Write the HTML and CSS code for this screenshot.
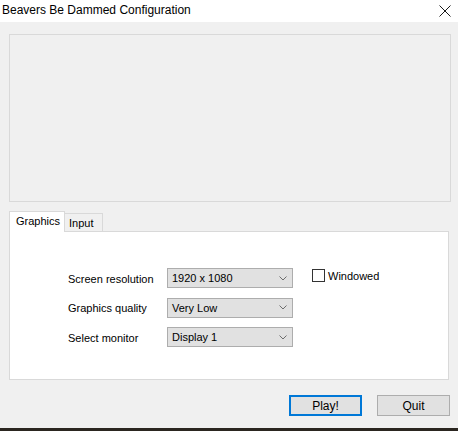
FILE: index.html
```html
<!DOCTYPE html>
<html>
<head>
<meta charset="utf-8">
<link rel="stylesheet" href="styles.css">
</head>
<body>
<div class="window">
  <div class="titlebar">
    <span class="title">Beavers Be Dammed Configuration</span>
    <svg class="close" width="12" height="12" viewBox="0 0 12 12"><path d="M0.5 0.5 L11.5 11.5 M11.5 0.5 L0.5 11.5" stroke="#1a1a1a" stroke-width="1" fill="none"/></svg>
  </div>
  <div class="client">
    <div class="banner"></div>
    <div class="tabs">
      <div class="tab active">Graphics</div>
      <div class="tab">Input</div>
    </div>
    <div class="tabpanel">
      <div class="form">
        <span class="label">Screen resolution</span>
        <div class="combo"><span>1920 x 1080</span><svg class="chev" width="8" height="5" viewBox="0 0 8 5"><polyline points="0.5,0.5 4,4 7.5,0.5" stroke="#6d6d6d" fill="none" stroke-width="1"/></svg></div>
        <label class="check"><span class="box"></span><span>Windowed</span></label>
        <span class="label">Graphics quality</span>
        <div class="combo"><span>Very Low</span><svg class="chev" width="8" height="5" viewBox="0 0 8 5"><polyline points="0.5,0.5 4,4 7.5,0.5" stroke="#6d6d6d" fill="none" stroke-width="1"/></svg></div>
        <span></span>
        <span class="label">Select monitor</span>
        <div class="combo"><span>Display 1</span><svg class="chev" width="8" height="5" viewBox="0 0 8 5"><polyline points="0.5,0.5 4,4 7.5,0.5" stroke="#6d6d6d" fill="none" stroke-width="1"/></svg></div>
        <span></span>
      </div>
    </div>
    <div class="buttons">
      <div class="btn default">Play!</div>
      <div class="btn">Quit</div>
    </div>
  </div>
  <div class="taskbar"></div>
</div>
</body>
</html>
```
FILE: styles.css
```css
* { box-sizing: border-box; }
html, body { margin: 0; padding: 0; }
body {
  width: 458px;
  height: 431px;
  overflow: hidden;
  font-family: "Liberation Sans", Arial, sans-serif;
  font-size: 11px;
  color: #000;
  background: #f0f0f0;
}
.window { display: flex; flex-direction: column; height: 431px; }
.titlebar {
  height: 22px;
  background: #fff;
  display: flex;
  align-items: center;
  justify-content: space-between;
  padding: 0 7px 0 2px;
}
.title { font-size: 12px; color: #000; position: relative; top: -1px; }
.close { margin-top: 0px; }
.client {
  flex: 1;
  background: #f0f0f0;
  padding: 12px 0 0 9px;
  display: flex;
  flex-direction: column;
}
.banner {
  width: 442px;
  height: 168px;
  border: 1px solid #d9d9d9;
  background: #f0f0f0;
}
.tabs {
  margin-top: 9px;
  height: 20px;
  display: flex;
  align-items: flex-end;
  position: relative;
  z-index: 1;
}
.tab {
  height: 18px;
  padding: 0 4px;
  border: 1px solid #d9d9d9;
  border-bottom: none;
  border-left: none;
  background: #f0f0f0;
  display: flex;
  align-items: center;
  width: 38px;
}
.tab.active {
  height: 21px;
  width: 56px;
  margin-bottom: -1px;
  border-left: 1px solid #d9d9d9;
  background: #fff;
  padding: 0 0 2px 6px;
}
.tabpanel {
  width: 440px;
  height: 149px;
  border: 1px solid #d9d9d9;
  background: #fff;
  padding: 36px 0 0 58px;
}
.form {
  display: grid;
  grid-template-columns: 99px 126px auto;
  grid-auto-rows: 20px;
  row-gap: 9.5px;
  column-gap: 0;
  align-items: center;
}
.label { padding-top: 1px; }
.combo {
  height: 20px;
  border: 1px solid #adadad;
  background: #e1e1e1;
  display: flex;
  align-items: center;
  justify-content: space-between;
  padding: 0 5px 0 4px;
}
.check {
  display: flex;
  align-items: center;
  margin-left: 19px;
  align-self: start;
  margin-top: 1px;
}
.box {
  width: 13px;
  height: 13px;
  border: 1px solid #333;
  background: #fff;
  margin-right: 3px;
}
.buttons {
  margin-top: 15px;
  display: flex;
  gap: 15px;
  padding-left: 280px;
}
.btn {
  width: 73px;
  height: 21px;
  border: 1px solid #adadad;
  background: #e1e1e1;
  display: flex;
  align-items: center;
  justify-content: center;
  font-size: 12px;
}
.btn.default { border: 2px solid #0078d7; }
.taskbar { height: 3px; background: #2b2620; }
```
